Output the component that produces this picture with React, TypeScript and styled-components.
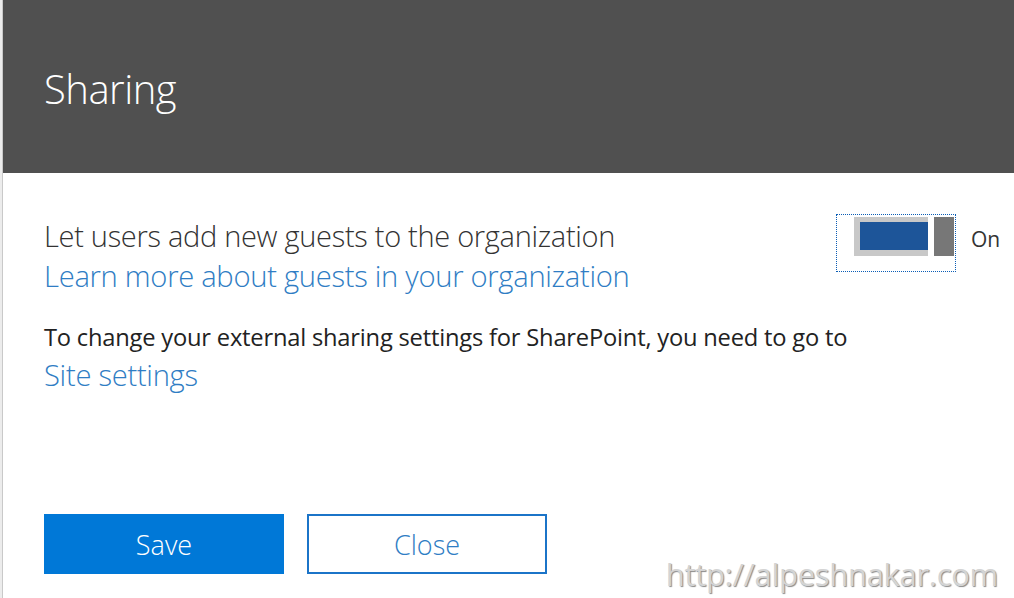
import React from "react";
import styled, { createGlobalStyle } from "styled-components";

const Global = createGlobalStyle`
  html, body { margin: 0; padding: 0; background: #fff; overflow: hidden; }
  body { font-family: "Open Sans", "Liberation Sans", sans-serif; }
`;

const Page = styled.div`
  display: flex;
  width: 1014px;
  height: 598px;
  position: relative;
  overflow: hidden;
`;

const LeftStrip = styled.div`
  width: 2px;
  flex: 0 0 2px;
  background: #ececec;
  border-right: 1px solid #c9c9c9;
`;

const Panel = styled.div`
  flex: 1;
  display: flex;
  flex-direction: column;
`;

const Header = styled.header`
  height: 173px;
  background: #505050;
  padding-left: 41px;
  box-sizing: border-box;
  display: flex;
  align-items: flex-start;
`;

const Title = styled.h1`
  margin: 59px 0 0;
  font-weight: 300;
  font-size: 40px;
  line-height: 60px;
  color: #fff;
  letter-spacing: -0.5px;
`;

const Body = styled.div`
  padding: 43px 0 0 41px;
  display: flex;
  flex-direction: column;
`;

const SettingRow = styled.div`
  display: flex;
  align-items: flex-start;
`;

const SettingText = styled.div`
  width: 792px;
  display: flex;
  flex-direction: column;
`;

const Label = styled.div`
  font-weight: 300;
  font-size: 29px;
  line-height: 40px;
  color: #333;
  letter-spacing: -0.3px;
`;

const Link = styled.a<{ $gap?: number }>`
  display: block;
  margin-top: ${(p) => p.$gap ?? 0}px;
  font-weight: 300;
  font-size: 29.2px;
  line-height: 40px;
  color: #2f7dc4;
  text-decoration: none;
  letter-spacing: -0.3px;
  cursor: pointer;
`;

const Note = styled.div`
  margin-top: 25px;
  font-size: 23.7px;
  line-height: 32px;
  color: #222;
  letter-spacing: -0.2px;
`;

const ToggleWrap = styled.div`
  display: flex;
  align-items: center;
  gap: 15px;
  margin-top: -2px;
`;

const FocusBox = styled.div`
  width: 118px;
  height: 56px;
  border: 1px dotted #0a5db5;
  position: relative;
`;

const Track = styled.div`
  position: absolute;
  left: 17px;
  top: 2px;
  width: 74px;
  height: 39px;
  background: #c8c8c8;
  box-sizing: border-box;
  padding: 5px 0 6px 6px;
  display: flex;
`;

const Fill = styled.div`
  flex: 1;
  background: #1d5599;
`;

const Thumb = styled.div`
  position: absolute;
  left: 97px;
  top: 2px;
  width: 20px;
  height: 39px;
  background: #777;
`;

const State = styled.span`
  font-size: 21px;
  color: #333;
  margin-bottom: 8px;
`;

const Buttons = styled.div`
  display: flex;
  gap: 23px;
  margin-top: auto;
  padding: 0 0 24px 41px;
`;

const Button = styled.button<{ $primary?: boolean }>`
  width: 240px;
  height: 60px;
  box-sizing: border-box;
  font-family: inherit;
  font-weight: 300;
  font-size: 27px;
  padding: 0;
  cursor: pointer;
  background: ${(p) => (p.$primary ? "#0078d7" : "#fff")};
  color: ${(p) => (p.$primary ? "#fff" : "#2f7dc4")};
  border: ${(p) => (p.$primary ? "none" : "2px solid #1b74c8")};
`;

const Watermark = styled.div`
  position: absolute;
  right: 16px;
  bottom: 3px;
  font-size: 31px;
  font-weight: 400;
  color: #d4d4d4;
  text-shadow: 1px 1px 1px #8a8a8a, -1px -1px 0 #fff;
  letter-spacing: -0.3px;
`;

export default function App() {
  return (
    <>
      <Global />
      <Page>
        <LeftStrip />
        <Panel>
          <Header>
            <Title>Sharing</Title>
          </Header>
          <Body>
            <SettingRow>
              <SettingText>
                <Label>Let users add new guests to the organization</Label>
                <Link>Learn more about guests in your organization</Link>
              </SettingText>
              <ToggleWrap>
                <FocusBox>
                  <Track>
                    <Fill />
                  </Track>
                  <Thumb />
                </FocusBox>
                <State>On</State>
              </ToggleWrap>
            </SettingRow>
            <Note>
              To change your external sharing settings for SharePoint, you need to go to
            </Note>
            <Link $gap={2}>Site settings</Link>
          </Body>
          <Buttons>
            <Button $primary>Save</Button>
            <Button>Close</Button>
          </Buttons>
        </Panel>
        <Watermark>http://alpeshnakar.com</Watermark>
      </Page>
    </>
  );
}
